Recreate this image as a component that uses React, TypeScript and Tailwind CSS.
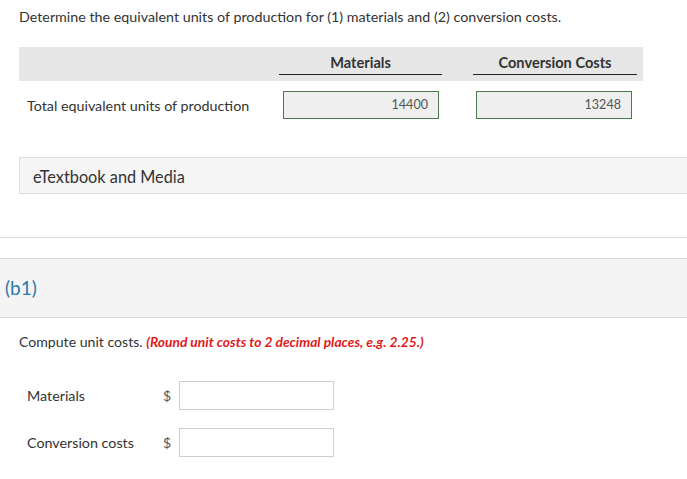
import React from "react";

export default function App() {
  return (
    <div className="w-[687px] h-[479px] overflow-hidden bg-white text-[#333] font-['Lato','Liberation_Sans',sans-serif]">
      <div className="px-[19px] pt-[9px]">
        <p className="text-[14.3px] leading-[16px] text-[#333]">
          Determine the equivalent units of production for (1) materials and (2) conversion costs.
        </p>
        <div className="mt-[22px] w-[624px]">
          <div className="flex h-[34px] bg-[#e6e6e6]">
            <div className="w-[260px]" />
            <div className="w-[163px] flex flex-col justify-end pb-[6px]">
              <div className="text-center text-[14.6px] font-bold text-[#333] leading-[16px] pb-[3px] border-b border-[#222]">Materials</div>
            </div>
            <div className="w-[31px]" />
            <div className="w-[164px] flex flex-col justify-end pb-[6px]">
              <div className="text-center text-[14.6px] font-bold text-[#333] leading-[16px] pb-[3px] border-b border-[#222]">Conversion Costs</div>
            </div>
          </div>
          <div className="flex items-center mt-[10px] h-[28px]">
            <div className="w-[260px] pl-[8px] pt-[2px] text-[14.3px] text-[#333]">Total equivalent units of production</div>
            <div className="w-[163px] pl-[4px]">
              <div className="w-[156px] h-[28px] border border-[#4b7a4b] bg-[#efefef] flex items-center justify-end pr-[10px] text-[12.6px] text-[#555]">14400</div>
            </div>
            <div className="w-[34px]" />
            <div className="w-[156px]">
              <div className="w-[156px] h-[28px] border border-[#4b7a4b] bg-[#efefef] flex items-center justify-end pr-[10px] text-[12.6px] text-[#555]">13248</div>
            </div>
          </div>
        </div>
        <div className="mt-[38px] w-[690px] h-[37px] bg-[#f5f5f5] border border-[#dedede] flex items-center pl-[13px] pt-[3px] text-[16.3px] text-[#333]">
          eTextbook and Media
        </div>
      </div>
      <div className="mt-[43px] border-t border-[#dcdcdc]" />
      <div className="mt-[20px] h-[60px] bg-[#f4f4f4] border-y border-[#dcdcdc] flex items-center pl-[5px] text-[19px] text-[#2b7bab]">
        (b1)
      </div>
      <div className="px-[19px]">
        <p className="mt-[16px] text-[14px] leading-[16px] text-[#333]">
          <span className="text-[14.1px]">Compute unit costs.</span>{" "}
          <span className="text-[13.8px] text-[#e01b1b] font-bold italic">(Round unit costs to 2 decimal places, e.g. 2.25.)</span>
        </p>
        <div className="mt-[31px] flex items-center h-[29px]">
          <div className="w-[144px] pl-[8px] text-[14.3px]">Materials</div>
          <div className="w-[16px] text-[14px] text-[#555]">$</div>
          <div className="w-[155px] h-[29px] border border-[#cfcfcf] bg-white" />
        </div>
        <div className="mt-[18px] flex items-center h-[29px]">
          <div className="w-[144px] pl-[8px] text-[14.3px]">Conversion costs</div>
          <div className="w-[16px] text-[14px] text-[#555]">$</div>
          <div className="w-[155px] h-[29px] border border-[#cfcfcf] bg-white" />
        </div>
      </div>
    </div>
  );
}
